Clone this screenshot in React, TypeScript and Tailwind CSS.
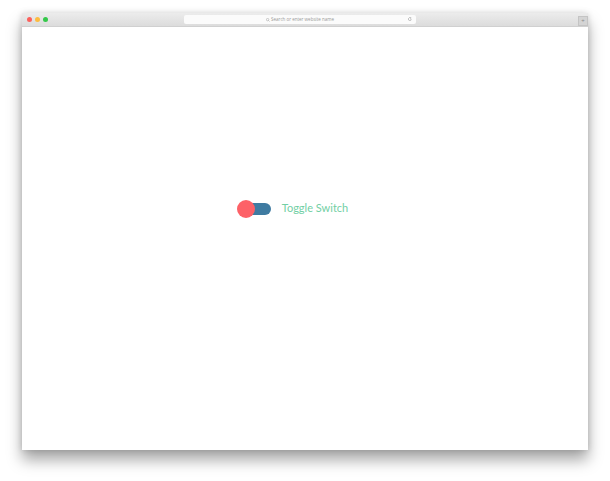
import React from "react";

export default function App() {
  return (
    <div className="w-[610px] h-[481px] bg-white relative overflow-hidden" style={{ fontFamily: "'Open Sans', sans-serif" }}>
      <div className="absolute left-[22px] top-[13px] w-[566px] h-[437px] bg-white flex flex-col shadow-[0_10px_14px_rgba(0,0,0,0.35),0_0_6px_rgba(0,0,0,0.15)]">
        <div className="h-[14px] bg-gradient-to-b from-[#ececec] to-[#dcdcdc] border-b border-[#d0d0d0] flex items-center relative">
          <div className="flex gap-[3.5px] pl-[5px]">
            <span className="w-[4.5px] h-[4.5px] rounded-full bg-[#fc605c]" />
            <span className="w-[4.5px] h-[4.5px] rounded-full bg-[#fdbc40]" />
            <span className="w-[4.5px] h-[4.5px] rounded-full bg-[#34c84a]" />
          </div>
          <div className="absolute left-[162px] top-[2px] w-[232px] h-[9px] bg-[#fbfbfb] rounded-[2px] flex items-center justify-center">
            <span className="text-[4.5px] text-[#9a9a9a] leading-none flex items-center gap-[1px]">
              <svg width="4" height="4" viewBox="0 0 10 10"><circle cx="4" cy="4" r="3" fill="none" stroke="#999" strokeWidth="1.2" /><line x1="6.2" y1="6.2" x2="9" y2="9" stroke="#999" strokeWidth="1.2" /></svg>
              Search or enter website name
            </span>
            <svg className="absolute right-[4px]" width="4" height="5" viewBox="0 0 10 12"><path d="M8 5a3.5 3.5 0 1 1-1.2-2.6" fill="none" stroke="#888" strokeWidth="1.3" /><path d="M6 0.5l2 2-2 1.5" fill="none" stroke="#888" strokeWidth="1.2" /></svg>
          </div>
          <div className="absolute right-0 top-[3px] w-[10px] h-[10px] bg-[#d4d4d4] border border-[#c4c4c4] flex items-center justify-center text-[6px] text-[#888] leading-none">+</div>
        </div>
        <div className="flex-1 flex items-center justify-center">
          <div className="flex items-center gap-[11px] -mt-[60px] -ml-[25px]">
            <div className="relative w-[34px] h-[18px] flex items-center">
              <div className="absolute left-[8px] w-[26px] h-[12px] rounded-full bg-[#3f7ba1]" />
              <div className="absolute left-0 w-[18px] h-[18px] rounded-full bg-[#fd6167]" />
            </div>
            <span className="text-[11px] text-[#72cfa4]" style={{ fontFamily: "Lato, sans-serif" }}>Toggle Switch</span>
          </div>
        </div>
      </div>
    </div>
  );
}
